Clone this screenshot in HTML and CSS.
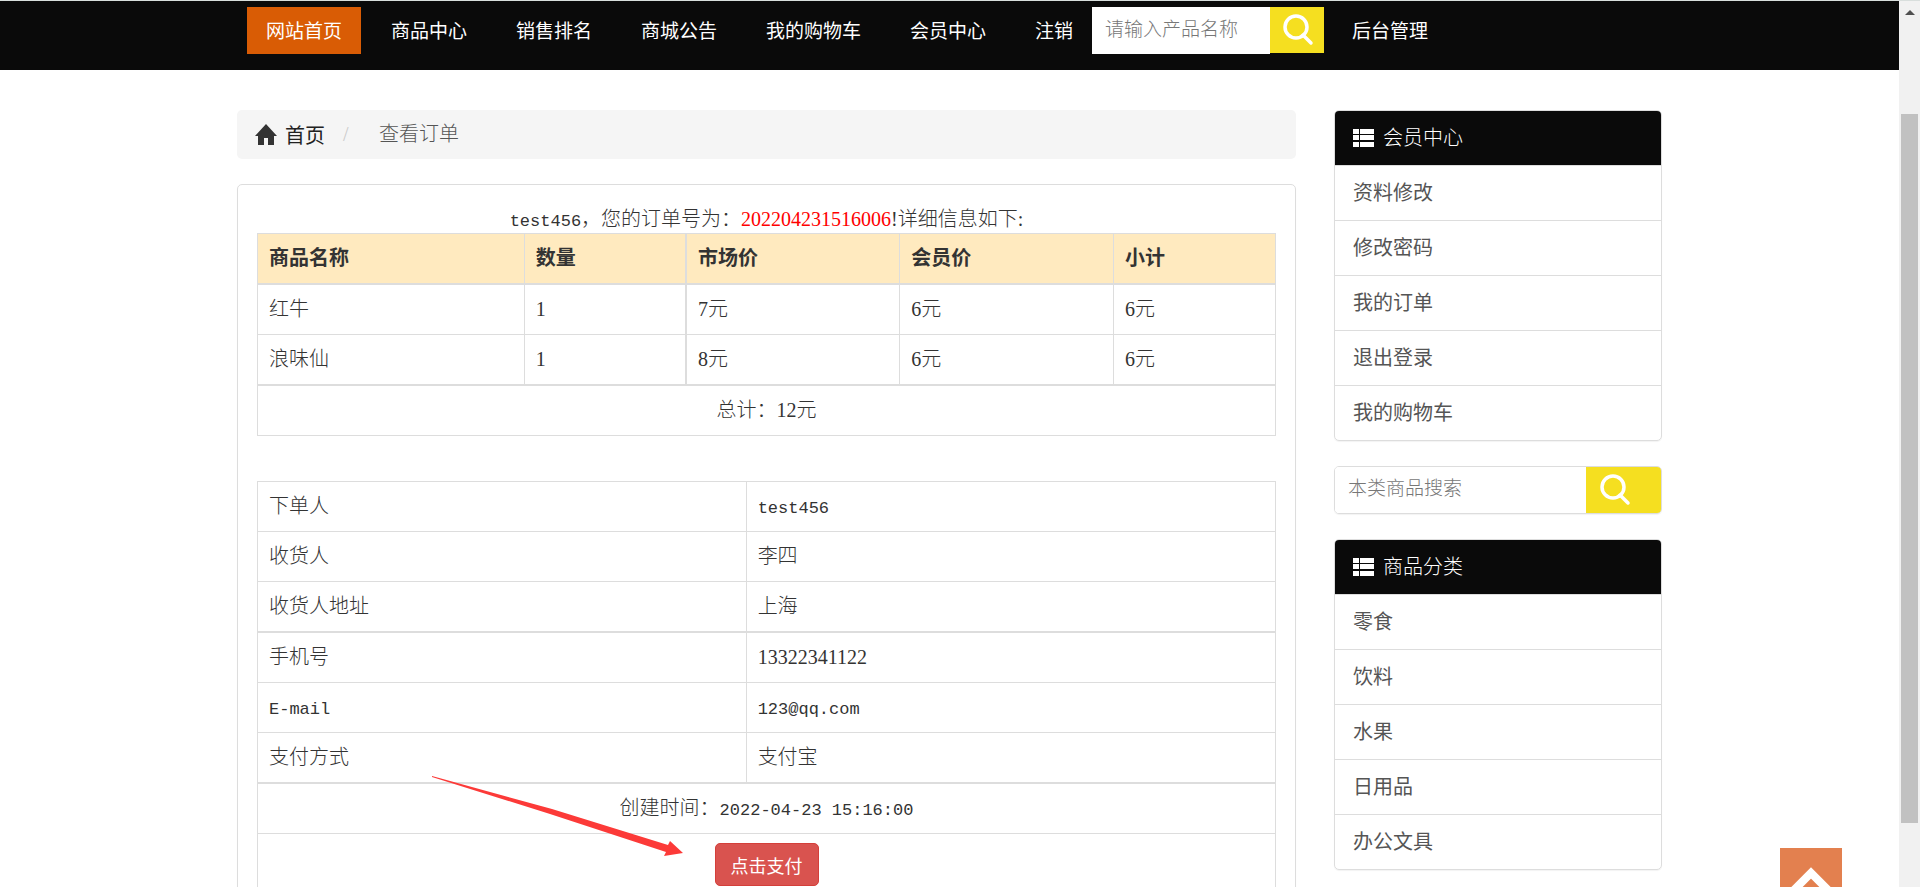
FILE: index.html
```html
<!DOCTYPE html>
<html lang="zh-CN">

<head>
  <meta charset="UTF-8" />
  <meta name="viewport" content="width=device-width, initial-scale=1.0" />
  <title>查看订单</title>
  <link rel="stylesheet" href="styles.css">
</head>

<body>

  <div class="page">
    <header class="navbar">
      <nav class="container nav">
        <a href="#" class="nav-link active">网站首页</a>
        <a href="#" class="nav-link">商品中心</a>
        <a href="#" class="nav-link">销售排名</a>
        <a href="#" class="nav-link">商城公告</a>
        <a href="#" class="nav-link">我的购物车</a>
        <a href="#" class="nav-link">会员中心</a>
        <a href="#" class="nav-link">注销</a>
        <form class="nav-search">
          <input type="text" placeholder="请输入产品名称" aria-label="请输入产品名称">
          <button type="button" aria-label="搜索">
            <svg class="search-icon" viewBox="0 0 32 32"><circle cx="13" cy="13" r="11" /><path d="M20 21 L28 29" /></svg>
          </button>
        </form>
        <a href="#" class="nav-link">后台管理</a>
      </nav>
    </header>

    <div class="container layout">
      <main class="main">
        <div class="breadcrumb">
          <svg class="home-icon" viewBox="0 0 22 21"><path d="M11 0 L22 12 H19 V21 H13 V14 H9 V21 H3 V12 H0 Z" /></svg>
          <a href="#">首页</a>
          <span class="slash">/</span>
          <span>查看订单</span>
        </div>

        <div class="panel order">
          <div class="order-title"><span class="mono">test456</span>，您的订单号为：<span class="order-no">202204231516006</span>!详细信息如下:</div>

          <table class="goods">
            <thead>
              <tr>
                <th class="col-name">商品名称</th>
                <th class="col-count">数量</th>
                <th class="col-price">市场价</th>
                <th class="col-price">会员价</th>
                <th>小计</th>
              </tr>
            </thead>
            <tbody>
              <tr>
                <td>红牛</td>
                <td>1</td>
                <td>7元</td>
                <td>6元</td>
                <td>6元</td>
              </tr>
              <tr>
                <td>浪味仙</td>
                <td>1</td>
                <td>8元</td>
                <td>6元</td>
                <td>6元</td>
              </tr>
              <tr class="strong-top">
                <td colspan="5" class="center">总计：12元</td>
              </tr>
            </tbody>
          </table>

          <table class="detail">
            <tbody>
              <tr>
                <td class="col-label">下单人</td>
                <td><span class="mono">test456</span></td>
              </tr>
              <tr>
                <td>收货人</td>
                <td>李四</td>
              </tr>
              <tr>
                <td>收货人地址</td>
                <td>上海</td>
              </tr>
              <tr class="strong-top">
                <td>手机号</td>
                <td>13322341122</td>
              </tr>
              <tr>
                <td><span class="mono">E-mail</span></td>
                <td><span class="mono">123@qq.com</span></td>
              </tr>
              <tr>
                <td>支付方式</td>
                <td>支付宝</td>
              </tr>
              <tr class="strong-top">
                <td colspan="2" class="center">创建时间：<span class="mono">2022-04-23 15:16:00</span></td>
              </tr>
              <tr>
                <td colspan="2" class="center pay-cell"><button type="button" class="pay">点击支付</button></td>
              </tr>
            </tbody>
          </table>

          <!-- arrow pointing at the pay button -->
          <svg class="arrow" viewBox="0 0 252 82"><path d="M0 0 L120 33 L236 69 L238 65 L251 77 L232 80 L234 76 L118 38 L0 1 Z" /></svg>
        </div>
      </main>

      <aside class="sidebar">
        <div class="panel list">
          <div class="list-title">
            <svg class="list-icon" viewBox="0 0 21 18"><path d="M0 0H6V5H0Z M7 0H21V5H7Z M0 6H6V11H0Z M7 6H21V11H7Z M0 13H6V18H0Z M7 13H21V18H7Z" /></svg>
            会员中心
          </div>
          <a href="#">资料修改</a>
          <a href="#">修改密码</a>
          <a href="#">我的订单</a>
          <a href="#">退出登录</a>
          <a href="#">我的购物车</a>
        </div>

        <form class="panel side-search">
          <input type="text" placeholder="本类商品搜索" aria-label="本类商品搜索">
          <button type="button" aria-label="搜索">
            <svg class="search-icon" viewBox="0 0 32 32"><circle cx="13" cy="13" r="11" /><path d="M20 21 L28 29" /></svg>
          </button>
        </form>

        <div class="panel list">
          <div class="list-title">
            <svg class="list-icon" viewBox="0 0 21 18"><path d="M0 0H6V5H0Z M7 0H21V5H7Z M0 6H6V11H0Z M7 6H21V11H7Z M0 13H6V18H0Z M7 13H21V18H7Z" /></svg>
            商品分类
          </div>
          <a href="#">零食</a>
          <a href="#">饮料</a>
          <a href="#">水果</a>
          <a href="#">日用品</a>
          <a href="#">办公文具</a>
        </div>
      </aside>
    </div>

    <button type="button" class="to-top" aria-label="返回顶部">
      <svg viewBox="0 0 62 62"><path d="M12 44 L31 25 L50 44" /></svg>
    </button>
  </div>

  <div class="scrollbar">
    <span class="scroll-up"></span>
    <span class="scroll-thumb"></span>
  </div>

</body>
</html>
```
FILE: styles.css
```css
* {
  box-sizing: border-box;
}

body {
  margin: 0;
  display: flex;
  height: 100vh;
  overflow: hidden;
  background: #fff;
  color: #333;
  font-family: "Liberation Serif", "Noto Sans CJK SC", serif;
  font-size: 20px;
  font-weight: 300;
  line-height: 27px;
}

a {
  color: #333;
  text-decoration: none;
}

input,
button {
  font-family: inherit;
  font-weight: inherit;
  border: none;
  border-radius: 0;
  padding: 0;
}

button {
  cursor: pointer;
}

.page {
  flex: 1;
  position: relative;
  min-width: 0;
  overflow: hidden;
}

.container {
  width: 100%;
  max-width: 1425px;
  margin: 0 auto;
}

/* top nav */
.navbar {
  height: 70px;
  padding-top: 6px;
  background: #0a0a0a;
  border-top: 1px solid #d8dedc;
}

.nav {
  display: flex;
  padding-left: 10px;
}

.nav-link {
  height: 47px;
  padding: 0 19px;
  margin-right: 11px;
  font-family: "Noto Sans CJK SC", sans-serif;
  font-size: 19px;
  font-weight: 400;
  line-height: 45px;
  color: #fff;
  white-space: nowrap;
}

.nav-link.active {
  background: #d95c05;
}

.nav-link:nth-child(7) {
  margin-right: 0;
}

.nav-search {
  display: flex;
  align-items: flex-start;
  margin-right: 9px;
}

.nav-search input {
  width: 178px;
  height: 47px;
  padding: 0 13px 2px;
  background: #fff;
  font-size: 19px;
}

input::placeholder {
  color: #777;
}

.nav-search button {
  width: 54px;
  height: 46px;
  padding: 0 0 0 13px;
  background: #f5df20;
}

.search-icon {
  display: block;
  width: 32px;
  height: 32px;
  fill: none;
  stroke: #fff;
  stroke-width: 3.5;
  stroke-linecap: round;
}

/* content */
.layout {
  display: grid;
  grid-template-columns: minmax(0, 1fr) 328px;
  gap: 38px;
  padding-top: 40px;
  align-items: start;
}

.panel {
  border: 1px solid #ddd;
  border-radius: 5px;
  box-shadow: 0 1px 1px rgba(0, 0, 0, 0.05);
}

.breadcrumb {
  display: flex;
  align-items: center;
  height: 49px;
  padding: 0 18px;
  margin-bottom: 25px;
  background: #f5f5f5;
  border-radius: 5px;
  color: #555;
}

.breadcrumb a {
  margin-left: 8px;
  font-family: "Noto Sans CJK SC", sans-serif;
  font-weight: 400;
  color: #222;
}

.home-icon {
  width: 22px;
  height: 21px;
  fill: #333;
}

.slash {
  width: 54px;
  padding-left: 18px;
  color: #ccc;
}

.order {
  position: relative;
  padding: 21px 19px;
}

.order-title {
  text-align: center;
}

.order-no {
  color: #f00;
}

.mono {
  font-family: "Liberation Mono", monospace;
  font-size: 17px;
  line-height: 1;
}

table {
  width: 100%;
  border-collapse: collapse;
  table-layout: fixed;
}

th,
td {
  padding: 11px;
  border: 1px solid #ddd;
  text-align: left;
}

th {
  background: #ffeabf;
  border-bottom-width: 2px;
  font-weight: bold;
}

.goods th:nth-child(3),
.goods td:nth-child(3) {
  border-left-width: 2px;
}

.strong-top td {
  border-top-width: 2px;
}

.center {
  text-align: center;
}

.col-name {
  width: 26.2%;
}

.col-count {
  width: 15.9%;
}

.col-price {
  width: 21%;
}

.col-label {
  width: 48%;
}

.detail {
  margin-top: 45px;
}

.pay-cell {
  padding: 9px;
}

.pay {
  height: 43px;
  padding: 0 15px;
  background: #d9534f;
  border: 1px solid #d43f3a;
  border-radius: 5px;
  color: #fff;
  font-family: "Noto Sans CJK SC", sans-serif;
  font-size: 18px;
  font-weight: 400;
}

.arrow {
  position: absolute;
  left: 194px;
  top: 591px;
  width: 252px;
  height: 82px;
  fill: #fc3a38;
}

/* sidebar */
.sidebar {
  display: flex;
  flex-direction: column;
  gap: 25px;
}

.list {
  overflow: hidden;
}

.list-title {
  display: flex;
  align-items: center;
  gap: 9px;
  height: 54px;
  padding: 0 18px;
  background: #0a0a0a;
  color: #fff;
}

.list-icon {
  width: 21px;
  height: 18px;
  fill: #fff;
}

.list a {
  display: block;
  height: 55px;
  padding: 0 18px;
  border-top: 1px solid #ddd;
  font-family: "Noto Sans CJK SC", sans-serif;
  font-weight: 400;
  line-height: 52px;
  color: #555;
}

.side-search {
  display: flex;
  overflow: hidden;
}

.side-search input {
  flex: 1;
  min-width: 0;
  height: 46px;
  padding: 0 13px 2px;
  font-size: 19px;
}

.side-search button {
  width: 75px;
  padding: 0 0 0 14px;
  background: #f5df20;
}

/* back to top, half out of view */
.to-top {
  position: absolute;
  right: 57px;
  bottom: -23px;
  width: 62px;
  height: 62px;
  background: #e3804f;
}

.to-top svg {
  display: block;
  fill: none;
  stroke: #fff;
  stroke-width: 8;
}

.scrollbar {
  display: flex;
  flex-direction: column;
  align-items: center;
  width: 21px;
  background: #f1f1f1;
  border-top: 1px solid #d8dedc;
}

.scroll-up {
  margin: 9px 0 99px;
  border: 5px solid transparent;
  border-top: none;
  border-bottom: 5px solid #505050;
}

.scroll-thumb {
  width: 17px;
  height: 80%;
  background: #c1c1c1;
}
```
